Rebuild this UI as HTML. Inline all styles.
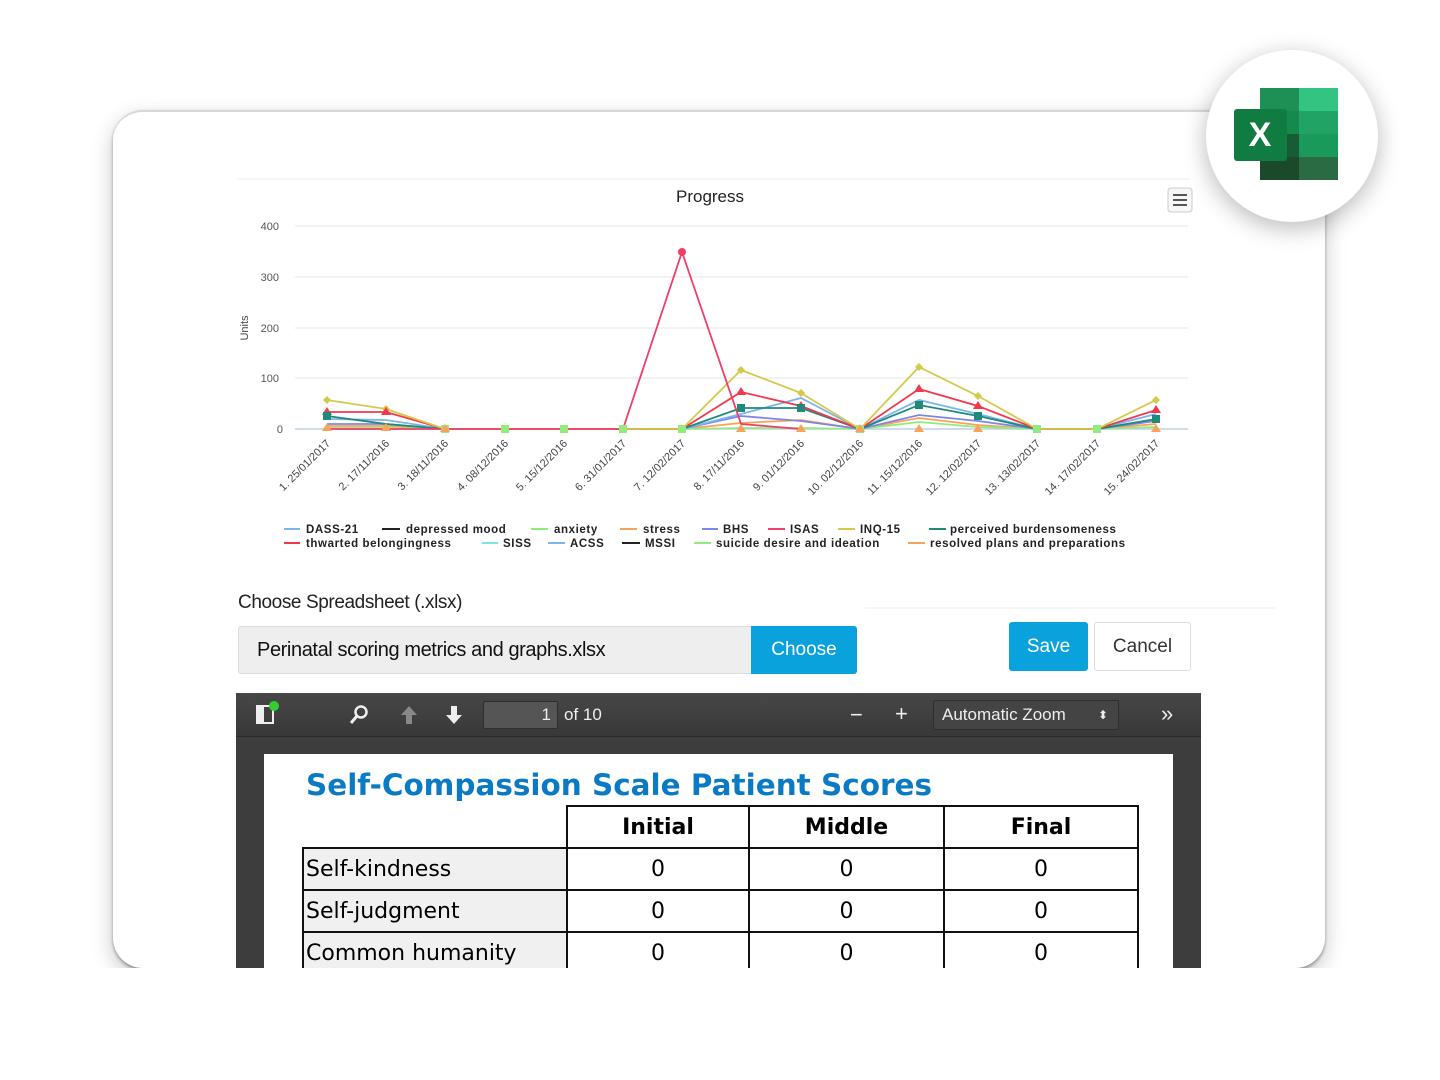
<!DOCTYPE html>
<html><head><meta charset="utf-8"><style>
*{margin:0;padding:0;box-sizing:border-box}
body{width:1440px;height:1080px;background:#fff;position:relative;overflow:hidden;font-family:"Liberation Sans",sans-serif}
.card{position:absolute;left:113px;top:110px;width:1212px;height:858px;border-radius:30px;background:#fff;box-shadow:0 2px 3px rgba(0,0,0,.35),0 8px 22px rgba(0,0,0,.22);overflow:hidden;border-top:2px solid #d8d8d8}
.abs{position:absolute}
.circ{position:absolute;left:1206px;top:50px;width:172px;height:172px;border-radius:50%;background:#fff;box-shadow:0 6px 24px rgba(0,0,0,.28)}
.lbl{position:absolute;left:238px;top:592px;font-size:19px;color:#222;letter-spacing:-0.4px}
.inp{position:absolute;left:238px;top:626px;width:514px;height:48px;background:#eee;border:1px solid #ddd;border-radius:3px 0 0 3px;font-size:20px;line-height:46px;padding-left:18px;color:#111;letter-spacing:-0.4px}
.btn{position:absolute;font-size:19px;text-align:center;border-radius:3px}
.pdf{position:absolute;left:236px;top:693px;width:965px;height:275px;background:#3d3d3d}
.tb{position:absolute;left:0;top:0;width:965px;height:44px;background:linear-gradient(#474747,#383838);border-bottom:1px solid #2a2a2a;color:#eee;font-size:17px}
.page{position:absolute;left:28px;top:61px;width:909px;height:250px;background:#fff}
table{position:absolute;left:38px;top:51px;border-collapse:collapse;font-family:"DejaVu Sans",sans-serif;font-size:22px}
td{border:2px solid #111;height:42px;padding:0 2px}
</style></head><body>
<div class="card"></div>

<svg class="abs" style="left:0;top:0" width="1440" height="1080" font-family="Liberation Sans, sans-serif">
<line x1="237" y1="179" x2="1190" y2="179" stroke="#eee"/>
<text x="710" y="202" font-size="17" text-anchor="middle" fill="#222">Progress</text>
<rect x="1168" y="188" width="24" height="24" rx="3" fill="#f6f6f6" stroke="#ccc"/>
<g stroke="#555" stroke-width="2"><line x1="1173" y1="195" x2="1187" y2="195"/><line x1="1173" y1="200" x2="1187" y2="200"/><line x1="1173" y1="205" x2="1187" y2="205"/></g>
<g stroke="#e6e6e6"><line x1="295" y1="226" x2="1188" y2="226"/><line x1="295" y1="277" x2="1188" y2="277"/><line x1="295" y1="328" x2="1188" y2="328"/><line x1="295" y1="378" x2="1188" y2="378"/></g>
<line x1="295" y1="429" x2="1188" y2="429" stroke="#c0d0e0" stroke-width="1.5"/>
<g font-size="11" fill="#555" text-anchor="end"><text x="279" y="230">400</text><text x="279" y="281">300</text><text x="279" y="332">200</text><text x="279" y="382">100</text><text x="283" y="433">0</text></g>
<text x="248" y="328" font-size="11" fill="#444" transform="rotate(-90 248 328)" text-anchor="middle">Units</text>
<g fill="none" stroke-width="1.8">
<polyline stroke="#f7a35c" points="327,426 386,426 445,429 505,429 564,429 623,429 682,429 741,423 801,420 860,429 919,418 978,425 1037,429 1097,429 1156,424"/>
<polyline stroke="#90ed7d" points="327,428 386,428 445,429 682,429 741,428 801,428 860,429 919,422 978,427 1037,429 1097,429 1156,427"/>
<polyline stroke="#8085e9" points="327,424 386,424 445,429 682,429 741,416 801,421 860,429 919,415 978,421 1037,429 1097,429 1156,421"/>
<polyline stroke="#7cb5ec" points="327,419 386,420 445,429 682,429 741,414 801,398 860,429 919,400 978,414 1037,429 1097,429 1156,414"/>
<polyline stroke="#1f8a7a" points="327,416 386,424 445,429 682,429 741,408 801,408 860,429 919,405 978,416 1037,429 1097,429 1156,419"/>
<polyline stroke="#f0394e" points="327,412 386,412 445,429 682,429 741,392 801,406 860,429 919,389 978,406 1037,429 1097,429 1156,410"/>
<polyline stroke="#d4c94a" points="327,400 386,409 445,429 682,429 741,370 801,393 860,429 919,367 978,396 1037,429 1097,429 1156,400"/>
<polyline stroke="#f0406a" points="327,429 623,429 682,252 741,424 801,429"/>
</g>
<circle cx="682" cy="252" r="4" fill="#f0406a"/>
<g fill="#d4c94a"><path d="M327 396l4 4-4 4-4-4z"/><path d="M386 405l4 4-4 4-4-4z"/><path d="M741 366l4 4-4 4-4-4z"/><path d="M801 389l4 4-4 4-4-4z"/><path d="M919 363l4 4-4 4-4-4z"/><path d="M978 392l4 4-4 4-4-4z"/><path d="M1156 396l4 4-4 4-4-4z"/></g>
<g fill="#f0394e"><path d="M327 407l5 8h-10z"/><path d="M386 407l5 8h-10z"/><path d="M741 387l5 8h-10z"/><path d="M801 401l5 8h-10z"/><path d="M919 384l5 8h-10z"/><path d="M978 401l5 8h-10z"/><path d="M1156 405l5 8h-10z"/></g>
<g fill="#1f8a7a"><rect x="737" y="404" width="8" height="8"/><rect x="797" y="404" width="8" height="8"/><rect x="915" y="401" width="8" height="8"/><rect x="974" y="412" width="8" height="8"/><rect x="1152" y="415" width="8" height="8"/><rect x="323" y="412" width="8" height="8"/></g>
<g fill="#90ed7d"><rect x="441" y="425" width="8" height="8"/><rect x="501" y="425" width="8" height="8"/><rect x="560" y="425" width="8" height="8"/><rect x="619" y="425" width="8" height="8"/><rect x="678" y="425" width="8" height="8"/><rect x="856" y="425" width="8" height="8"/><rect x="1033" y="425" width="8" height="8"/><rect x="1093" y="425" width="8" height="8"/></g>
<g fill="#f7a35c"><path d="M327 423l5 8h-10z"/><path d="M386 423l5 8h-10z"/><path d="M445 424l5 8h-10z"/><path d="M741 424l5 8h-10z"/><path d="M801 424l5 8h-10z"/><path d="M860 424l5 8h-10z"/><path d="M919 424l5 8h-10z"/><path d="M978 424l5 8h-10z"/><path d="M1156 424l5 8h-10z"/></g>
<g font-size="11" fill="#444" text-anchor="end">
<text transform="translate(331,444) rotate(-45)">1. 25/01/2017</text>
<text transform="translate(390,444) rotate(-45)">2. 17/11/2016</text>
<text transform="translate(449,444) rotate(-45)">3. 18/11/2016</text>
<text transform="translate(509,444) rotate(-45)">4. 08/12/2016</text>
<text transform="translate(568,444) rotate(-45)">5. 15/12/2016</text>
<text transform="translate(627,444) rotate(-45)">6. 31/01/2017</text>
<text transform="translate(686,444) rotate(-45)">7. 12/02/2017</text>
<text transform="translate(745,444) rotate(-45)">8. 17/11/2016</text>
<text transform="translate(805,444) rotate(-45)">9. 01/12/2016</text>
<text transform="translate(864,444) rotate(-45)">10. 02/12/2016</text>
<text transform="translate(923,444) rotate(-45)">11. 15/12/2016</text>
<text transform="translate(982,444) rotate(-45)">12. 12/02/2017</text>
<text transform="translate(1041,444) rotate(-45)">13. 13/02/2017</text>
<text transform="translate(1101,444) rotate(-45)">14. 17/02/2017</text>
<text transform="translate(1160,444) rotate(-45)">15. 24/02/2017</text>
</g>
<g font-size="11.5" font-weight="bold" fill="#222" letter-spacing="0.6">
<g stroke-width="2"><line x1="284" y1="529" x2="300" y2="529" stroke="#7cb5ec"/><line x1="382" y1="529" x2="400" y2="529" stroke="#222"/><line x1="531" y1="529" x2="548" y2="529" stroke="#90ed7d"/><line x1="620" y1="529" x2="637" y2="529" stroke="#f7a35c"/><line x1="702" y1="529" x2="718" y2="529" stroke="#8085e9"/><line x1="768" y1="529" x2="785" y2="529" stroke="#f0406a"/><line x1="838" y1="529" x2="855" y2="529" stroke="#d4c94a"/><line x1="929" y1="529" x2="946" y2="529" stroke="#1f8a7a"/>
<line x1="284" y1="543" x2="300" y2="543" stroke="#f0394e"/><line x1="482" y1="543" x2="498" y2="543" stroke="#7ee3e3"/><line x1="548" y1="543" x2="565" y2="543" stroke="#7cb5ec"/><line x1="622" y1="543" x2="640" y2="543" stroke="#222"/><line x1="694" y1="543" x2="711" y2="543" stroke="#90ed7d"/><line x1="908" y1="543" x2="925" y2="543" stroke="#f7a35c"/></g>
<text x="306" y="533">DASS-21</text><text x="406" y="533">depressed mood</text><text x="554" y="533">anxiety</text><text x="643" y="533">stress</text><text x="723" y="533">BHS</text><text x="790" y="533">ISAS</text><text x="860" y="533">INQ-15</text><text x="950" y="533">perceived burdensomeness</text>
<text x="306" y="547">thwarted belongingness</text><text x="503" y="547">SISS</text><text x="570" y="547">ACSS</text><text x="645" y="547">MSSI</text><text x="716" y="547">suicide desire and ideation</text><text x="930" y="547">resolved plans and preparations</text>
</g>
<line x1="865" y1="608" x2="1275" y2="608" stroke="#eee"/>
</svg>

<div class="lbl">Choose Spreadsheet (.xlsx)</div>
<div class="inp">Perinatal scoring metrics and graphs.xlsx</div>
<div class="btn" style="left:751px;top:626px;width:106px;height:48px;line-height:48px;background:#0aa2dc;color:#fff;border-radius:0 3px 3px 0">Choose</div>
<div class="btn" style="left:1009px;top:622px;width:79px;height:49px;line-height:49px;background:#0aa2dc;color:#fff">Save</div>
<div class="btn" style="left:1094px;top:622px;width:97px;height:49px;line-height:47px;background:#fff;color:#333;border:1px solid #ddd">Cancel</div>

<div class="pdf">
 <div class="tb">
  <div class="abs" style="left:20px;top:12px;width:18px;height:19px;border:2px solid #eee"><div style="width:6px;height:15px;background:#eee"></div></div>
  <div class="abs" style="left:33px;top:8px;width:10px;height:10px;border-radius:50%;background:#3c3"></div>
  <svg class="abs" style="left:112px;top:11px" width="22" height="22"><circle cx="13" cy="8" r="5.5" fill="none" stroke="#eee" stroke-width="2.5"/><line x1="9" y1="12" x2="3" y2="19" stroke="#eee" stroke-width="3"/></svg>
  <svg class="abs" style="left:162px;top:11px" width="22" height="22"><path d="M11 2l8 9h-5v9h-6v-9h-5z" fill="#888"/></svg>
  <svg class="abs" style="left:207px;top:11px" width="22" height="22"><path d="M11 20l8-9h-5v-9h-6v9h-5z" fill="#eee"/></svg>
  <div class="abs" style="left:247px;top:8px;width:75px;height:28px;background:#555;border:1px solid #2e2e2e;border-radius:2px;text-align:right;padding-right:6px;line-height:26px">1</div>
  <div class="abs" style="left:328px;top:12px">of 10</div>
  <div class="abs" style="left:614px;top:9px;font-size:22px">−</div>
  <div class="abs" style="left:659px;top:8px;font-size:22px">+</div>
  <div class="abs" style="left:697px;top:7px;width:186px;height:30px;border:1px solid #2e2e2e;border-radius:2px;background:#444;line-height:28px;padding-left:8px">Automatic Zoom<span style="position:absolute;right:10px;font-size:12px">⬍</span></div>
  <div class="abs" style="left:925px;top:8px;font-size:22px">»</div>
 </div>
 <div class="page">
  <svg class="abs" style="left:0;top:0" width="909" height="60"><text x="42" y="41" font-family="DejaVu Sans, sans-serif" font-weight="bold" font-size="29" fill="#0a7ac4" textLength="626" lengthAdjust="spacingAndGlyphs">Self-Compassion Scale Patient Scores</text></svg>
  <table>
   <tr><td style="width:264px;border:none;border-right:2px solid #111;border-bottom:2px solid #111"></td><td style="width:182px;text-align:center;font-weight:bold">Initial</td><td style="width:195px;text-align:center;font-weight:bold">Middle</td><td style="width:194px;text-align:center;font-weight:bold">Final</td></tr>
   <tr><td style="background:#f0f0f0">Self-kindness</td><td align="center">0</td><td align="center">0</td><td align="center">0</td></tr>
   <tr><td style="background:#f0f0f0">Self-judgment</td><td align="center">0</td><td align="center">0</td><td align="center">0</td></tr>
   <tr><td style="background:#f0f0f0">Common humanity</td><td align="center">0</td><td align="center">0</td><td align="center">0</td></tr>
  </table>
 </div>
</div>
<div class="abs" style="left:0;top:968px;width:1440px;height:112px;background:#fff"></div>

<div class="circ"></div>
<svg class="abs" style="left:1230px;top:86px" width="112" height="96">
 <rect x="30" y="2" width="39" height="23" fill="#1e8f55"/><rect x="69" y="2" width="39" height="23" fill="#33c481"/>
 <rect x="30" y="25" width="39" height="23" fill="#168a4d"/><rect x="69" y="25" width="39" height="23" fill="#21a366"/>
 <rect x="30" y="48" width="39" height="23" fill="#185c37"/><rect x="69" y="48" width="39" height="23" fill="#1a9a5a"/>
 <rect x="30" y="71" width="39" height="23" fill="#1b4a2b"/><rect x="69" y="71" width="39" height="23" fill="#2b6b44"/>
 <rect x="4" y="23" width="53" height="52" rx="3" fill="#107c41"/>
 <text x="30" y="60" font-family="Liberation Sans, sans-serif" font-weight="bold" font-size="34" fill="#fff" text-anchor="middle">X</text>
</svg>
</body></html>
